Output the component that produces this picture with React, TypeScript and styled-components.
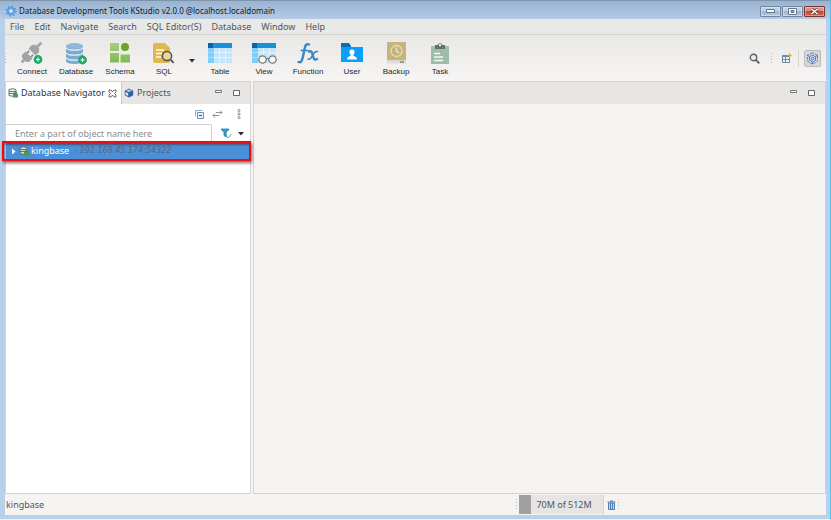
import React from "react";
import styled, { createGlobalStyle, css } from "styled-components";

const ui = `"Noto Sans", "Open Sans", sans-serif`;

const Global = createGlobalStyle`
  * { box-sizing: border-box; }
  body { margin: 0; font: 9px/12px ${ui}; color: #50555a; }
  button, input { font: inherit; color: inherit; }
  button { padding: 0; border: 0; background: none; }
  svg { display: block; flex: none; }
`;

const Frame = styled.div`
  min-height: 100vh;
  display: flex;
  flex-direction: column;
  padding: 0 4px 4px 5px;
  background: #b9d0ea;
  border-top: 1px solid #7f93aa;
  border-right: 1px solid #4fc3ea;
  border-bottom: 1px solid #eef3f8;
`;

const TitleBar = styled.header`
  height: 18px;
  margin: 0 -4px 0 -5px;
  padding: 2px 5px 0 5px;
  display: flex;
  align-items: center;
  gap: 2px;
  background: linear-gradient(#98b3d1, #b5cbe5);
`;

const Title = styled.h1`
  flex: 1;
  margin: 0;
  font-size: 8px;
  font-weight: 400;
  line-height: 14px;
  color: #111b28;
`;

const WindowButtons = styled.div`
  display: flex;
  gap: 1px;
`;

const WindowButton = styled.button<{ $danger?: boolean }>`
  width: 21px;
  height: 11px;
  display: grid;
  place-items: center;
  border: 1px solid ${(p) => (p.$danger ? "#7c3734" : "#72879f")};
  border-radius: 1px;
  box-shadow: inset 0 0 0 1px rgba(255, 255, 255, 0.35);
  background: ${(p) =>
    p.$danger
      ? "linear-gradient(#dd9184 45%, #c24a38 50%, #cf6550)"
      : "linear-gradient(#c0d2e7 45%, #9db6d2 50%, #b3c8e0)"};
`;

const MenuBar = styled.nav`
  height: 16px;
  display: flex;
  align-items: center;
  gap: 10px;
  padding-left: 5px;
  background: #e8e8e7;
  border-bottom: 1px solid #d6d4d2;
`;

const MenuItem = styled.button`
  line-height: 14px;
`;

const ToolBar = styled.div`
  height: 46px;
  display: flex;
  align-items: center;
  padding: 0 5px 0 0;
  background: linear-gradient(#e9e8e6, #f6f5f3);
`;

const Grip = styled.span<{ $height: number }>`
  width: 1px;
  height: ${(p) => p.$height}px;
  margin: 0 2px 0 0;
  flex: none;
  background: repeating-linear-gradient(#bdb9b6 0 1px, transparent 1px 3px);
`;

const Tool = styled.button`
  width: 44px;
  flex: none;
  display: flex;
  flex-direction: column;
  align-items: center;
  font: 8px/12px "Liberation Sans", Arial, sans-serif;
  color: #25282b;
`;

const Tools = styled.div`
  display: flex;
  align-items: center;
  padding: 4px 0 0 2px;
`;

const DropButton = styled.button`
  width: 12px;
  height: 20px;
  display: grid;
  place-items: center;
`;

const Shortcuts = styled.div`
  margin-left: auto;
  display: flex;
  align-items: center;
  gap: 5px;
`;

const IconButton = styled.button<{ $pressed?: boolean; $narrow?: boolean }>`
  width: ${(p) => (p.$narrow ? 8 : 14)}px;
  height: 14px;
  flex: none;
  display: grid;
  place-items: center;
  ${(p) =>
    p.$pressed &&
    css`
      width: 17px;
      height: 17px;
      background: #d8d7d6;
      border: 1px solid #bdbab8;
      border-radius: 2px;
    `}
`;

const Rule = styled.span`
  width: 1px;
  height: 17px;
  background: #d5d2d0;
`;

const Workbench = styled.main`
  flex: 1;
  display: grid;
  grid-template-columns: minmax(200px, 30%) 1fr;
  gap: 2px;
  background: #f6f5f3;
`;

const Panel = styled.section<{ $white?: boolean }>`
  min-width: 0;
  background: ${(p) => (p.$white ? "#fff" : "#f5f4f2")};
  border: 1px solid #d7d3d0;
`;

const TabStrip = styled.div`
  height: 22px;
  display: flex;
  background: #e7e6e4;
`;

const Tab = styled.button<{ $active?: boolean }>`
  display: flex;
  align-items: center;
  gap: 3px;
  padding: 0 4px 0 2px;
  white-space: nowrap;
  ${(p) =>
    p.$active &&
    css`
      background: #fff;
      border-right: 1px solid #cfcbc8;
      color: #303438;
    `}
`;

const PanelButtons = styled.div`
  margin-left: auto;
  padding-right: 6px;
  display: flex;
  align-items: center;
  gap: 4px;
`;

const ViewTools = styled.div`
  height: 20px;
  display: flex;
  align-items: center;
  justify-content: flex-end;
  gap: 4px;
  padding-right: 4px;
`;

const FilterRow = styled.div`
  height: 18px;
  display: flex;
  align-items: center;
`;

const FilterInput = styled.input`
  flex: 1;
  min-width: 0;
  height: 18px;
  padding: 0 9px;
  border: 1px solid #d0ccc9;
  border-left: 0;
  border-radius: 0 2px 2px 0;
  background: #fff;
  outline: 0;
  &::placeholder { color: #8b8e90; opacity: 1; }
`;

const FilterButtons = styled.div`
  width: 38px;
  display: flex;
  align-items: center;
  padding-left: 7px;
  gap: 2px;
`;

const Tree = styled.ul`
  margin: 0;
  padding: 0;
  list-style: none;
`;

const TreeRow = styled.li`
  position: relative;
  height: 18px;
  display: flex;
  align-items: center;
  gap: 2px;
  padding-left: 3px;
  background: #4a90d9;
  color: #fff;
  white-space: nowrap;
  &::after {
    content: "";
    position: absolute;
    inset: -1px -1px -1px -4px;
    border: 2px solid #e80f12;
    box-shadow: 1px 2px 3px rgba(60, 20, 20, 0.65), inset 1px 2px 2px rgba(60, 20, 30, 0.5);
    pointer-events: none;
  }
`;

const Address = styled.em`
  padding-left: 3px;
  font: italic 8px/14px "DejaVu Sans", sans-serif;
  color: #56687c;
`;

const StatusBar = styled.footer`
  height: 21px;
  display: grid;
  grid-template-columns: 62% 1fr;
  align-items: center;
  padding-left: 1px;
  background: #f5f4f2;
`;

const HeapArea = styled.div`
  display: flex;
  align-items: center;
  padding-left: 2px;
`;

const Heap = styled.div`
  width: 85px;
  height: 19px;
  display: flex;
  align-items: center;
  gap: 5px;
  background: #e6e5e3;
  border-right: 1px solid #d6d3d1;
`;

const HeapUsed = styled.span`
  width: 12px;
  height: 19px;
  background: #a0a0a0;
`;

const Plus = ({ x, y }: { x: number; y: number }) => (
  <g>
    <circle cx={x} cy={y} r="4.4" fill="#22a866" />
    <path d={`M${x - 2} ${y}h4M${x} ${y - 2}v4`} stroke="#fff" strokeWidth="1.2" />
  </g>
);

const Art = ({ children }: { children: React.ReactNode }) => (
  <svg width="26" height="24" viewBox="0 0 26 24" aria-hidden="true">{children}</svg>
);

const ConnectIcon = () => (
  <Art>
    <g transform="translate(12.5 10.5) rotate(-45)" fill="#a3a3a3">
      <path d="M-14-1.300h4v2.600h-4zM-10.500-3l2-2h5v10h-5l-2-2z" />
      <path d="M-3.500-3.700h3v1.800h-3zM-3.500 1.900h3v1.800h-3z" fill="#888" />
      <path d="M.8-5h4.700l3 2.500v5l-3 2.500H.8zM8.500-1.300H14v2.600H8.500z" />
    </g>
    <Plus x={19} y={17.5} />
  </Art>
);

const DatabaseIcon = () => (
  <Art>
    <path d="M3 4v15c0 4 17 4 17 0V4" fill="#7ca9cf" />
    <ellipse cx="11.5" cy="4" rx="8.5" ry="3" fill="#8db8da" />
    <path d="M3 5.5c1 3.6 16 3.6 17 0M3 10.5c1 3.6 16 3.6 17 0M3 15.5c1 3.6 16 3.6 17 0" fill="none" stroke="#e3edf5" strokeWidth="1.2" />
    <Plus x={19.5} y={18} />
  </Art>
);

const SchemaIcon = () => (
  <Art>
    <defs>
      <linearGradient id="leaf" x1="0" y1="0" x2="0" y2="1">
        <stop stopColor="#a8cf7b" /><stop offset="1" stopColor="#83b95a" />
      </linearGradient>
    </defs>
    <path d="M3 1h9v8H3zM3 11h9v9.5H3zM13.500 12.500h9.500v8h-9.500z" fill="url(#leaf)" />
    <circle cx="18" cy="5" r="4" fill="#65a52d" />
  </Art>
);

const SqlIcon = () => (
  <Art>
    <path d="M2 3q0-2 2-2h10l5 5v14q0 1-2 1H4q-2 0-2-2z" fill="#dfb851" />
    <path d="M5 8h8M5 11.500h6M5 15h5" stroke="#fffbe9" strokeWidth="1.4" />
    <circle cx="16" cy="14" r="4.600" fill="#f0e0b0" fillOpacity=".75" stroke="#505050" strokeWidth="1.500" />
    <path d="M19.300 17.300l3.400 3.500" stroke="#505050" strokeWidth="1.700" />
  </Art>
);

const TableShape = () => (
  <>
    <path d="M1 1h24v20H1z" fill="#c4e6fb" />
    <path d="M1 6h6v15H1z" fill="#82cefa" />
    <path d="M7 10.500h18M7 15.500h18M12.500 6v15M18.500 6v15" stroke="#e4f4fd" />
    <path d="M1 10.500h6M1 15.500h6" stroke="#a6dcfb" />
    <path d="M1 1h24v5H1z" fill="#1692da" />
    <path d="M1 1h5v5H1z" fill="#0d63a6" />
  </>
);

const TableIcon = () => <Art><TableShape /></Art>;

const ViewIcon = () => (
  <Art>
    <TableShape />
    <g fill="#f6f6f6" stroke="#737373" strokeWidth="1.200">
      <circle cx="11.500" cy="17.500" r="3.700" />
      <circle cx="21.500" cy="17.500" r="3.700" />
      <path d="M15 17q1.500-1.200 3 0" fill="none" />
    </g>
  </Art>
);

const FunctionIcon = () => (
  <Art>
    <g fill="none" stroke="#3d84c4" strokeLinecap="round">
      <path d="M3.500 20c2.500 1 3.500-1 4.200-4.500L9.800 6C10.500 2.500 12 1.500 14 2.500" strokeWidth="2.400" />
      <path d="M6 8.500h7" strokeWidth="1.300" />
      <path d="M14 9.500c3-1 3 1 4 4.500s1.500 4.500 4 3" strokeWidth="2.400" />
      <path d="M22.500 9.500c-3-.5-4 2-5 4s-2 4.500-4.500 3.500" strokeWidth="1.500" />
    </g>
  </Art>
);

const UserIcon = () => (
  <Art>
    <path d="M2 1h8l2 3v3H2z" fill="#0871b5" />
    <path d="M2 5h22v15H2z" fill="#08a0fa" />
    <circle cx="13" cy="10" r="2.600" fill="#fff" />
    <path d="M8 17.500q0-3 3.500-3.500v-2h3v2q3.500.5 3.500 3.500z" fill="#fff" />
  </Art>
);

const BackupIcon = () => (
  <Art>
    <path d="M4 0h19v18.500H4z" fill="#c5b47c" />
    <path d="M4 18.500h19V21.500H4z" fill="#dedede" />
    <path d="M17 20h4" stroke="#555" />
    <circle cx="13.500" cy="9" r="5.500" fill="none" stroke="#e7deba" strokeWidth="1.300" />
    <path d="M13.500 5.500V9l2.500 2" fill="none" stroke="#f0e9ce" strokeWidth="1.300" />
  </Art>
);

const TaskIcon = () => (
  <Art>
    <path d="M4 4h18v18H4z" fill="#9cbda6" />
    <path d="M8 3h2.500q2.500-4 5 0H18v4H8z" fill="#696e70" />
    <circle cx="13" cy="3" r="1.200" fill="#eee" />
    <path d="M7 11.500h6M7 15h9M7 18.500h9" stroke="#f5faf6" strokeWidth="1.500" />
  </Art>
);

const Caret = () => (
  <svg width="8" height="5" viewBox="0 0 8 5" aria-hidden="true"><path d="M1 1h6L4 4.500z" fill="#2c3135" /></svg>
);

const Gear = () => (
  <svg width="12" height="12" viewBox="0 0 12 12" fill="none" stroke="#4b9bee" aria-hidden="true">
    <circle cx="6" cy="6" r="4.800" strokeWidth="1.600" strokeDasharray="1.700 2.070" />
    <circle cx="6" cy="6" r="3.200" strokeWidth="1.500" />
    <circle cx="6" cy="6" r="1.200" fill="#dceaff" stroke="none" />
  </svg>
);

const DbLock = ({ light }: { light?: boolean }) => (
  <svg width="10" height="10" viewBox="0 0 10 10" aria-hidden="true">
    <path d="M1 1.500q3.500-1.500 7 0v6q-3.500 1.500-7 0z" fill={light ? "#d3dade" : "#f4f4f4"} stroke="#56646b" strokeWidth=".9" />
    <path d="M1 3.500h7M1 5.500h7" stroke="#56646b" strokeWidth=".9" />
    <path d="M6 6V5q1.500-2 3 0v1" fill="none" stroke="#5d8658" />
    <path d="M5 6h5v3.500H5z" fill="#43a047" />
  </svg>
);

const CloseMark = () => (
  <svg width="9" height="9" viewBox="0 0 9 9" fill="none" stroke="#555b60" aria-hidden="true">
    <path d="M1 1h2l1.500 2L6 1h2v2L6.500 4.500 8 6v2H6L4.500 6 3 8H1V6l1.500-1.500L1 3z" strokeWidth=".9" />
  </svg>
);

const Cube = () => (
  <svg width="10" height="10" viewBox="0 0 10 10" aria-hidden="true">
    <path d="M5 .5l4.200 2.200v4.600L5 9.500.8 7.300V2.700z" fill="#315f9f" />
    <path d="M5 1.300l3 1.500L5 4.300 2 2.800z" fill="#a9c7ea" />
    <path d="M1.600 4L4.200 5.300v2.800L1.600 6.800z" fill="#e1ebf7" />
  </svg>
);

const Minimize = () => (
  <svg width="8" height="8" viewBox="0 0 8 8" aria-hidden="true"><path d="M.5 1.500h6v2h-6z" fill="#fff" stroke="#777" /></svg>
);
const Maximize = () => (
  <svg width="8" height="8" viewBox="0 0 8 8" aria-hidden="true"><path d="M.5 1.500h6v5h-6z" fill="#fff" stroke="#666" /></svg>
);

const SizeButtons = () => (
  <PanelButtons>
    <IconButton aria-label="Minimize panel"><Minimize /></IconButton>
    <IconButton aria-label="Maximize panel"><Maximize /></IconButton>
  </PanelButtons>
);

const menus = ["File", "Edit", "Navigate", "Search", "SQL Editor(S)", "Database", "Window", "Help"];

const tools: [string, () => React.JSX.Element][] = [
  ["Connect", ConnectIcon],
  ["Database", DatabaseIcon],
  ["Schema", SchemaIcon],
  ["SQL", SqlIcon],
  ["Table", TableIcon],
  ["View", ViewIcon],
  ["Function", FunctionIcon],
  ["User", UserIcon],
  ["Backup", BackupIcon],
  ["Task", TaskIcon],
];

export default function App() {
  return (
    <>
      <Global />
      <Frame>
        <TitleBar>
          <Gear />
          <Title>Database Development Tools KStudio v2.0.0 @localhost.localdomain</Title>
          <WindowButtons>
            <WindowButton aria-label="Minimize">
              <svg width="9" height="4" viewBox="0 0 9 4"><path d="M.5.500h8v3h-8z" fill="#fff" stroke="#65768a" /></svg>
            </WindowButton>
            <WindowButton aria-label="Maximize">
              <svg width="9" height="7" viewBox="0 0 9 7"><path d="M.5.500h8v6h-8z" fill="#fff" stroke="#65768a" /><path d="M3 2.500h3v2H3z" fill="#8ba4c0" stroke="#65768a" /></svg>
            </WindowButton>
            <WindowButton aria-label="Close" $danger>
              <svg width="9" height="7" viewBox="0 0 9 7"><path d="M1.500 1l6 5M7.500 1l-6 5" stroke="#6b3430" strokeWidth="3" /><path d="M1.500 1l6 5M7.500 1l-6 5" stroke="#fff" strokeWidth="1.600" /></svg>
            </WindowButton>
          </WindowButtons>
        </TitleBar>

        <MenuBar aria-label="Main menu">
          {menus.map((m) => <MenuItem key={m}>{m}</MenuItem>)}
        </MenuBar>

        <ToolBar>
          <Grip $height={10} />
          <Tools>
            {tools.map(([label, Icon]) => (
              <React.Fragment key={label}>
                <Tool><Icon />{label}</Tool>
                {label === "SQL" && <DropButton aria-label="SQL options"><Caret /></DropButton>}
              </React.Fragment>
            ))}
          </Tools>
          <Shortcuts>
            <IconButton aria-label="Search">
              <svg width="11" height="11" viewBox="0 0 11 11" fill="none" stroke="#5d6265">
                <circle cx="4.500" cy="4.500" r="3.200" strokeWidth="1.400" /><path d="M7 7l3.300 3.300" strokeWidth="1.800" />
              </svg>
            </IconButton>
            <span />
            <Grip $height={10} />
            <IconButton aria-label="Open perspective">
              <svg width="11" height="11" viewBox="0 0 11 11">
                <path d="M1.500 2.500h7v7h-7z" fill="#edf7fb" stroke="#71858f" />
                <path d="M1 3.500h7" stroke="#4f8ec4" /><path d="M4.500 4v6M1 6.500h8" stroke="#5a94a8" />
                <path d="M8.500 0l1 1.500 1.500 1-1.500 1-1 1.500-1-1.500-1.500-1 1.500-1z" fill="#e4a72f" />
              </svg>
            </IconButton>
            <Rule />
            <IconButton $pressed aria-label="Database perspective">
              <svg width="13" height="13" viewBox="0 0 13 13" fill="none" stroke="#4a77bd" strokeWidth=".9">
                <path d="M6.500 3L9.500 4.700v3.600l-3 1.700-3-1.700V4.700z" fill="#c3d7f2" />
                <circle cx="6.500" cy="6.500" r="1.200" />
                <path d="M6.500.800L1.500 3.200v6.100l5 2.900 5-2.900V3.200z" strokeDasharray="2.500 1.200" />
                <path d="M1 3l2.500 1.700M12 3L9.500 4.700M6.500 10v2" />
              </svg>
            </IconButton>
          </Shortcuts>
        </ToolBar>

        <Workbench>
          <Panel $white>
            <TabStrip>
              <Tab $active><DbLock />Database Navigator<CloseMark /></Tab>
              <Tab><Cube />Projects</Tab>
              <SizeButtons />
            </TabStrip>
            <ViewTools>
              <IconButton aria-label="Collapse all">
                <svg width="9" height="9" viewBox="0 0 9 9"><path d="M.5 6.500v-6h7" fill="none" stroke="#8cafd1" /><path d="M2.500 2.500h6v6h-6z" fill="#eef6fd" stroke="#6793bd" /><path d="M4 5.500h3" stroke="#245b91" /></svg>
              </IconButton>
              <IconButton aria-label="Link with editor">
                <svg width="11" height="8" viewBox="0 0 11 8" fill="none" stroke="#909395"><path d="M4 2.500h6M8 .5l2 2-2 2M7 5.500H1M3 3.500l-2 2 2 2" /></svg>
              </IconButton>
              <span />
              <IconButton aria-label="View menu">
                <svg width="4" height="10" viewBox="0 0 4 10" fill="none" stroke="#777" strokeWidth=".8"><circle cx="2" cy="1.500" r="1.100" /><circle cx="2" cy="5" r="1.100" /><circle cx="2" cy="8.500" r="1.100" /></svg>
              </IconButton>
            </ViewTools>
            <FilterRow>
              <FilterInput aria-label="Object name filter" placeholder="Enter a part of object name here" />
              <FilterButtons>
                <IconButton aria-label="Filter">
                  <svg width="12" height="11" viewBox="0 0 12 11"><path d="M1 1h8L6.200 4.500V9L4 7.500v-3z" fill="#26a4d3" stroke="#237da9" strokeWidth=".8" /><path d="M6.500 8l1.500 2 3.500-4" fill="none" stroke="#65b36c" /></svg>
                </IconButton>
                <DropButton aria-label="Filter options"><Caret /></DropButton>
              </FilterButtons>
            </FilterRow>
            <Tree>
              <TreeRow>
                <IconButton $narrow aria-label="Expand kingbase">
                  <svg width="5" height="7" viewBox="0 0 5 7"><path d="M1 .5l3.500 3L1 6.500z" fill="#fff" /></svg>
                </IconButton>
                <DbLock light />
                <span>kingbase</span>
                <Address>- 192.168.45.174:54322</Address>
              </TreeRow>
            </Tree>
          </Panel>
          <Panel>
            <TabStrip><SizeButtons /></TabStrip>
          </Panel>
        </Workbench>

        <StatusBar>
          <span>kingbase</span>
          <HeapArea>
            <Grip $height={11} />
            <Heap><HeapUsed />70M of 512M</Heap>
            <IconButton aria-label="Run garbage collector">
              <svg width="9" height="10" viewBox="0 0 9 10" fill="none" stroke="#507fb2"><path d="M.5 2h8M3 1h3" /><path d="M1.500 3h6v6.500h-6zM3.500 3v6M5.500 3v6" fill="#bcd3e9" /></svg>
            </IconButton>
            <Grip $height={11} />
          </HeapArea>
        </StatusBar>
      </Frame>
    </>
  );
}
